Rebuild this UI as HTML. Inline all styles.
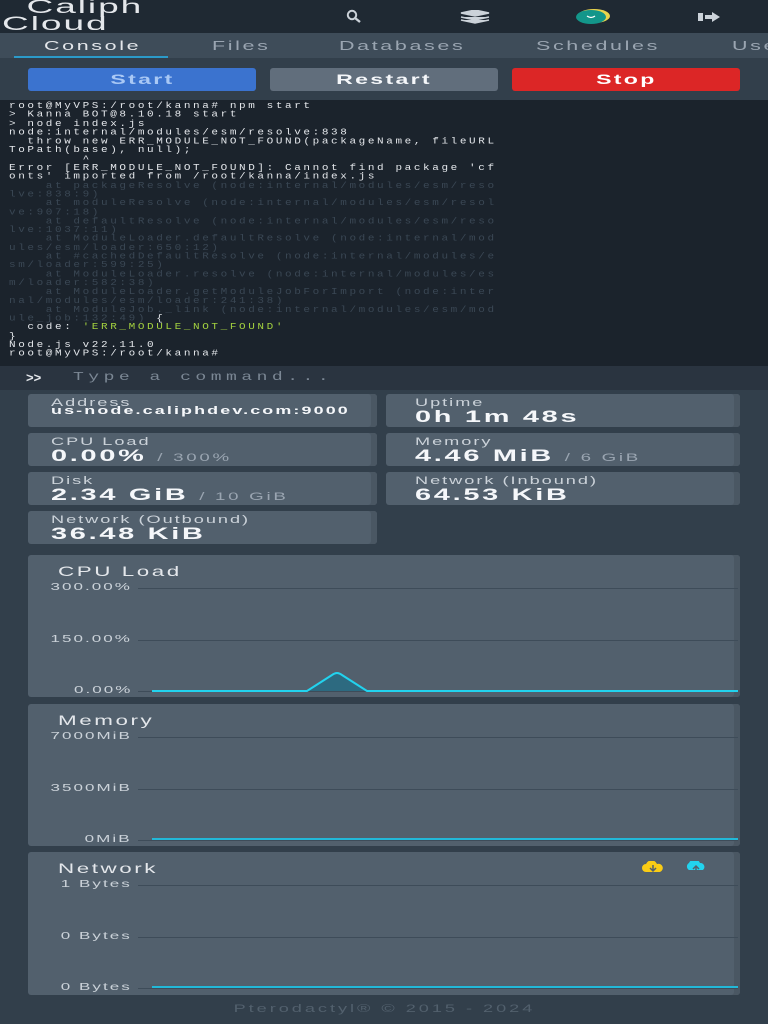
<!DOCTYPE html>
<html><head><meta charset="utf-8"><style>
*{margin:0;padding:0;box-sizing:border-box}
body{width:768px;height:1024px;background:#323f4b;font-family:"Liberation Sans",sans-serif;position:relative;overflow:hidden;color:#e4e7eb}
.a{position:absolute}
.sx{transform:scaleX(1.65);transform-origin:left top}
.sc{display:inline-block;transform:scaleX(1.65);transform-origin:center}
.hdr{left:0;top:0;width:768px;height:33px;background:#1f2933}
.logo{left:2px;top:-1px;font-size:19px;line-height:17px;letter-spacing:1px;color:#e4e7eb;transform:scaleX(1.95);transform-origin:left top;white-space:nowrap}
.tabs{left:0;top:33px;width:768px;height:25px;background:#3e4c59}
.tab{top:38px;font-size:13px;letter-spacing:1.6px;color:#9aa5b1;white-space:nowrap}
.btn{top:68px;height:23px;border-radius:3px;font-size:14px;font-weight:bold;letter-spacing:1.4px;text-align:center;line-height:23px}
.term{left:0;top:100px;width:768px;height:266px;background:#1b232c}
pre{font-family:"Liberation Mono",monospace;font-size:11px;line-height:10.3px;letter-spacing:2.6px;color:#e4e7eb;position:absolute;left:9px;top:102px;transform:scaleY(0.86);transform-origin:top left;white-space:pre}
.d{color:#3a4754}.g{color:#a3d13f}
.inp{left:0;top:366px;width:768px;height:24px;background:#2a3440}
.card{background:#52606d;border-radius:3px;box-shadow:-6px 0 0 #4a5763 inset}
.st{width:349px;height:33px}
.st .l{position:absolute;left:23px;top:3px;font-size:11px;letter-spacing:1.2px;color:#cbd2d9;white-space:nowrap;transform:scaleX(1.65);transform-origin:left top}
.st .v{position:absolute;left:23px;top:13px;font-size:17px;font-weight:bold;letter-spacing:1.6px;color:#f5f7fa;white-space:nowrap;transform:scaleX(1.7);transform-origin:left top}
.st .v small{font-size:11px;font-weight:normal;color:#9aa5b1}
.ch{left:28px;width:712px;height:142px}
.ct{position:absolute;left:30px;top:8px;font-size:14px;letter-spacing:1.6px;color:#e4e7eb;transform:scaleX(1.6);transform-origin:left top}
.yl{position:absolute;right:608px;font-size:10px;letter-spacing:1.2px;color:#cbd2d9;text-align:right;white-space:nowrap;transform:scaleX(1.7);transform-origin:right top}
.gl{position:absolute;left:110px;right:2px;height:1px;background:#3e4c59}
</style></head><body>
<div class="a hdr"></div>
<div class="a logo">&nbsp;&nbsp;Caliph<br>Cloud</div>
<svg class="a" style="left:345px;top:9px" width="30" height="16" viewBox="0 0 30 16"><circle cx="7" cy="6" r="4.2" fill="none" stroke="#cbd2d9" stroke-width="2"/><path d="M10 9l5 4" stroke="#cbd2d9" stroke-width="2.4"/></svg>
<svg class="a" style="left:460px;top:10px" width="30" height="14" viewBox="0 0 30 14"><path d="M1 3l14-3 14 3-14 3z M1 7l14 3 14-3 M1 10l14 3 14-3" fill="#cbd2d9" stroke="#cbd2d9" stroke-width="1.5"/></svg>
<svg class="a" style="left:573px;top:8px" width="40" height="18" viewBox="0 0 40 18"><ellipse cx="21" cy="8" rx="16" ry="7" fill="#e8d44d"/><ellipse cx="18" cy="9" rx="15" ry="7" fill="#13968a"/><path d="M14 8q4 3 8 0" stroke="#fff" stroke-width="1.2" fill="none"/></svg>
<svg class="a" style="left:696px;top:10px" width="30" height="14" viewBox="0 0 30 14"><path d="M2 3h5v8H2z M9 5h7V2l8 5-8 5V9H9z" fill="#cbd2d9"/></svg>
<div class="a tabs"></div>
<div class="a tab sx" style="left:44px;color:#e4e7eb">Console</div>
<div class="a" style="left:14px;top:56px;width:154px;height:2px;background:#2b9ac9"></div>
<div class="a tab sx" style="left:212px">Files</div>
<div class="a tab sx" style="left:339px">Databases</div>
<div class="a tab sx" style="left:536px">Schedules</div>
<div class="a tab sx" style="left:732px">Users</div>
<div class="a btn" style="left:28px;width:228px;background:#3b73cf;color:#a9c8f5"><span class="sc">Start</span></div>
<div class="a btn" style="left:270px;width:228px;background:#616e7c;color:#f5f7fa"><span class="sc">Restart</span></div>
<div class="a btn" style="left:512px;width:228px;background:#dc2626;color:#fff"><span class="sc">Stop</span></div>
<div class="a term"></div>
<pre>root@MyVPS:/root/kanna# npm start
> Kanna BOT@8.10.18 start
> node index.js
node:internal/modules/esm/resolve:838
  throw new ERR_MODULE_NOT_FOUND(packageName, fileURL
ToPath(base), null);
        ^
Error [ERR_MODULE_NOT_FOUND]: Cannot find package 'cf
onts' imported from /root/kanna/index.js
<span class="d">    at packageResolve (node:internal/modules/esm/reso
lve:838:9)
    at moduleResolve (node:internal/modules/esm/resol
ve:907:18)
    at defaultResolve (node:internal/modules/esm/reso
lve:1037:11)
    at ModuleLoader.defaultResolve (node:internal/mod
ules/esm/loader:650:12)
    at #cachedDefaultResolve (node:internal/modules/e
sm/loader:599:25)
    at ModuleLoader.resolve (node:internal/modules/es
m/loader:582:38)
    at ModuleLoader.getModuleJobForImport (node:inter
nal/modules/esm/loader:241:38)
    at ModuleJob._link (node:internal/modules/esm/mod
ule_job:132:49)</span> {
  code: <span class="g">'ERR_MODULE_NOT_FOUND'</span>
}
Node.js v22.11.0
root@MyVPS:/root/kanna#</pre>
<div class="a inp"></div>
<div class="a" style="left:26px;top:370px;font-size:13px;font-weight:bold;color:#e4e7eb">&gt;&gt;</div>
<div class="a" style="left:73px;top:370px;font-family:'Liberation Mono',monospace;font-size:12px;letter-spacing:3px;color:#7b8794;transform:scaleX(1.5);transform-origin:left top;white-space:nowrap">Type a command...</div>

<div class="a card st" style="left:28px;top:394px"><div class="l">Address</div><div class="v" style="font-size:11px;top:11px;letter-spacing:1.3px;transform:scaleX(1.63)">us-node.caliphdev.com:9000</div></div>
<div class="a card st" style="left:386px;top:394px;width:354px"><div class="l" style="left:29px">Uptime</div><div class="v" style="left:29px">0h 1m 48s</div></div>
<div class="a card st" style="left:28px;top:433px"><div class="l">CPU Load</div><div class="v">0.00% <small>/ 300%</small></div></div>
<div class="a card st" style="left:386px;top:433px;width:354px"><div class="l" style="left:29px">Memory</div><div class="v" style="left:29px">4.46 MiB <small>/ 6 GiB</small></div></div>
<div class="a card st" style="left:28px;top:472px"><div class="l">Disk</div><div class="v">2.34 GiB <small>/ 10 GiB</small></div></div>
<div class="a card st" style="left:386px;top:472px;width:354px"><div class="l" style="left:29px">Network (Inbound)</div><div class="v" style="left:29px">64.53 KiB</div></div>
<div class="a card st" style="left:28px;top:511px"><div class="l">Network (Outbound)</div><div class="v">36.48 KiB</div></div>

<div class="a card ch" style="top:555px"><div class="ct">CPU Load</div>
<div class="yl" style="top:27px">300.00%</div><div class="gl" style="top:33px"></div>
<div class="yl" style="top:79px">150.00%</div><div class="gl" style="top:85px"></div>
<div class="yl" style="top:130px">0.00%</div><div class="gl" style="top:136px"></div>
<svg class="a" style="left:0;top:0" width="712" height="142"><path d="M279 136L309 117L339 136Z" fill="#2d6a80"/><path d="M124 136H279L304 120Q309 116 314 120L339 136H710" stroke="#22d3ee" stroke-width="2" fill="none"/></svg>
</div>
<div class="a card ch" style="top:704px"><div class="ct">Memory</div>
<div class="yl" style="top:27px">7000MiB</div><div class="gl" style="top:33px"></div>
<div class="yl" style="top:79px">3500MiB</div><div class="gl" style="top:85px"></div>
<div class="yl" style="top:130px">0MiB</div><div class="gl" style="top:136px"></div>
<div class="a" style="left:124px;right:2px;top:134px;height:2px;background:#22b8d8"></div>
</div>
<div class="a card ch" style="top:852px;height:143px"><div class="ct">Network</div>
<svg class="a" style="left:613px;top:9px" width="24" height="14" viewBox="0 0 24 14"><path d="M5 11a4 4 0 010-8a6 6 0 0111 0a4 4 0 013 8z" fill="#facc15"/><path d="M12 4v6M9 7l3 3 3-3" stroke="#52606d" stroke-width="1.5" fill="none"/></svg>
<svg class="a" style="left:656px;top:9px" width="24" height="14" viewBox="0 0 24 14"><path d="M5 9a4 4 0 010-7a6 6 0 0111 0a4 4 0 013 7z" fill="#22d3ee"/><path d="M12 13V5M9 8l3-3 3 3" stroke="#52606d" stroke-width="1.5" fill="none"/></svg>
<div class="yl" style="top:27px">1 Bytes</div><div class="gl" style="top:33px"></div>
<div class="yl" style="top:79px">0 Bytes</div><div class="gl" style="top:85px"></div>
<div class="yl" style="top:130px">0 Bytes</div><div class="gl" style="top:136px"></div>
<div class="a" style="left:124px;right:2px;top:134px;height:2px;background:#22b8d8"></div>
</div>
<div class="a" style="left:0;width:768px;top:1003px;text-align:center;font-size:11px;letter-spacing:1.8px;color:#52606d"><span class="sc">Pterodactyl® © 2015 - 2024</span></div>
</body></html>
